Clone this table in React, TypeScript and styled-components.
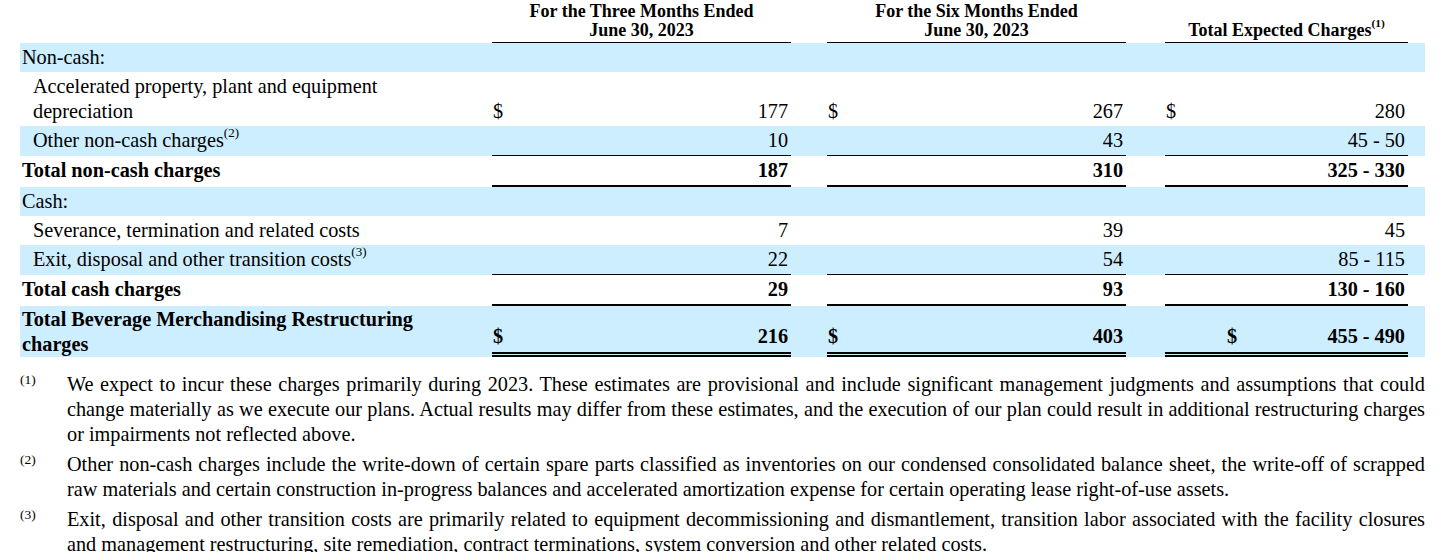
import styled, { createGlobalStyle } from "styled-components";

type Rule = "none" | "thin" | "thick" | "double";

type Amt = {
  value: string;
  dollar?: boolean;
  inset?: number;
};

type Line = {
  label: string;
  sup?: string;
  indent?: boolean;
  bold?: boolean;
  shaded?: boolean;
  grand?: boolean;
  rule?: Rule;
  values?: Amt[];
};

const GlobalStyle = createGlobalStyle`
  body {
    margin: 0;
    background: #fff;
    color: #000;
    font-family: "Liberation Serif", "Times New Roman", serif;
  }
`;

const Page = styled.div`
  width: 1405px;
  padding-left: 20px;
`;

const Table = styled.table`
  width: 1405px;
  table-layout: fixed;
  border-collapse: separate;
  border-spacing: 0;
  font-size: 20.25px;
  line-height: 25px;
`;

const Col = styled.col<{ $w: number }>`
  width: ${(p) => p.$w}px;
`;

const HeadCell = styled.th<{ $ruled?: boolean }>`
  font-size: 18px;
  line-height: 19px;
  font-weight: bold;
  text-align: center;
  vertical-align: bottom;
  padding: 2px 0 2px;
  border-bottom: ${(p) => (p.$ruled ? "1px solid #000" : "none")};
`;

const Row = styled.tr<{ $shaded?: boolean }>`
  background: ${(p) => (p.$shaded ? "#cceeff" : "transparent")};
`;

const Label = styled.td<{ $indent?: boolean; $bold?: boolean; $grand?: boolean }>`
  padding: ${(p) => (p.$grand ? "1px" : "2px")} 30px
    ${(p) => (p.$grand ? "0" : "2px")} ${(p) => (p.$indent ? 13 : 2)}px;
  font-weight: ${(p) => (p.$bold ? "bold" : "normal")};
  vertical-align: top;
`;

const ruleCss: Record<Rule, string> = {
  none: "none",
  thin: "1px solid #000",
  thick: "2px solid #000",
  double: "5px double #000",
};

const Value = styled.td<{ $rule: Rule; $bold?: boolean; $grand?: boolean }>`
  vertical-align: bottom;
  padding: 2px 3px ${(p) => (p.$grand ? 3 : 2)}px 1px;
  font-weight: ${(p) => (p.$bold ? "bold" : "normal")};
  border-bottom: ${(p) => ruleCss[p.$rule]};
`;

const Spacer = styled.td``;

const Amount = styled.div`
  display: flex;
  align-items: baseline;
`;

const Dollar = styled.span<{ $inset?: number }>`
  margin-left: ${(p) => p.$inset ?? 0}px;
`;

const Figure = styled.span`
  margin-left: auto;
`;

const Sup = styled.span<{ $size: number; $raise: number }>`
  font-size: ${(p) => p.$size}px;
  line-height: 0;
  vertical-align: ${(p) => p.$raise}px;
`;

const Notes = styled.div`
  margin-top: 15px;
  display: flex;
  flex-direction: column;
  gap: 5px;
`;

const Note = styled.div`
  display: grid;
  grid-template-columns: 47px 1fr;
`;

const Marker = styled.span`
  font-size: 13.5px;
  line-height: 16px;
`;

const NoteText = styled.p`
  margin: 0;
  font-size: 20.25px;
  line-height: 25px;
  text-align: justify;
`;

const lines: Line[] = [
  { label: "Non-cash:", shaded: true },
  {
    label: "Accelerated property, plant and equipment depreciation",
    indent: true,
    values: [
      { value: "177", dollar: true },
      { value: "267", dollar: true },
      { value: "280", dollar: true },
    ],
  },
  {
    label: "Other non-cash charges",
    sup: "(2)",
    indent: true,
    shaded: true,
    rule: "thin",
    values: [{ value: "10" }, { value: "43" }, { value: "45 - 50" }],
  },
  {
    label: "Total non-cash charges",
    bold: true,
    rule: "thick",
    values: [{ value: "187" }, { value: "310" }, { value: "325 - 330" }],
  },
  { label: "Cash:", shaded: true },
  {
    label: "Severance, termination and related costs",
    indent: true,
    values: [{ value: "7" }, { value: "39" }, { value: "45" }],
  },
  {
    label: "Exit, disposal and other transition costs",
    sup: "(3)",
    indent: true,
    shaded: true,
    rule: "thin",
    values: [{ value: "22" }, { value: "54" }, { value: "85 - 115" }],
  },
  {
    label: "Total cash charges",
    bold: true,
    rule: "thick",
    values: [{ value: "29" }, { value: "93" }, { value: "130 - 160" }],
  },
  {
    label: "Total Beverage Merchandising Restructuring charges",
    bold: true,
    shaded: true,
    grand: true,
    rule: "double",
    values: [
      { value: "216", dollar: true },
      { value: "403", dollar: true },
      { value: "455 - 490", dollar: true, inset: 61 },
    ],
  },
];

const notes = [
  {
    mark: "(1)",
    text: "We expect to incur these charges primarily during 2023. These estimates are provisional and include significant management judgments and assumptions that could change materially as we execute our plans. Actual results may differ from these estimates, and the execution of our plan could result in additional restructuring charges or impairments not reflected above.",
  },
  {
    mark: "(2)",
    text: "Other non-cash charges include the write-down of certain spare parts classified as inventories on our condensed consolidated balance sheet, the write-off of scrapped raw materials and certain construction in-progress balances and accelerated amortization expense for certain operating lease right-of-use assets.",
  },
  {
    mark: "(3)",
    text: "Exit, disposal and other transition costs are primarily related to equipment decommissioning and dismantlement, transition labor associated with the facility closures and management restructuring, site remediation, contract terminations, system conversion and other related costs.",
  },
];

const widths = [472, 299, 36, 299, 39, 243, 17];

const ValueCell = ({ amt, line }: { amt?: Amt; line: Line }) => (
  <Value $rule={line.rule ?? "none"} $bold={line.bold} $grand={line.grand}>
    {amt && (
      <Amount>
        {amt.dollar && <Dollar $inset={amt.inset}>$</Dollar>}
        <Figure>{amt.value}</Figure>
      </Amount>
    )}
  </Value>
);

const App = () => {
  return (
    <Page>
      <GlobalStyle />
      <Table>
        <colgroup>
          {widths.map((w, i) => (
            <Col key={i} $w={w} />
          ))}
        </colgroup>
        <thead>
          <tr>
            <HeadCell />
            <HeadCell $ruled>
              For the Three Months Ended
              <br />
              June 30, 2023
            </HeadCell>
            <HeadCell />
            <HeadCell $ruled>
              For the Six Months Ended
              <br />
              June 30, 2023
            </HeadCell>
            <HeadCell />
            <HeadCell $ruled>
              Total Expected Charges
              <Sup $size={11.4} $raise={9}>
                (1)
              </Sup>
            </HeadCell>
            <HeadCell />
          </tr>
        </thead>
        <tbody>
          {lines.map((line, i) => (
            <Row key={i} $shaded={line.shaded}>
              <Label $indent={line.indent} $bold={line.bold} $grand={line.grand}>
                {line.label}
                {line.sup && (
                  <Sup $size={13} $raise={10}>
                    {line.sup}
                  </Sup>
                )}
              </Label>
              <ValueCell amt={line.values?.[0]} line={line} />
              <Spacer />
              <ValueCell amt={line.values?.[1]} line={line} />
              <Spacer />
              <ValueCell amt={line.values?.[2]} line={line} />
              <Spacer />
            </Row>
          ))}
        </tbody>
      </Table>
      <Notes>
        {notes.map((n) => (
          <Note key={n.mark}>
            <Marker>{n.mark}</Marker>
            <NoteText>{n.text}</NoteText>
          </Note>
        ))}
      </Notes>
    </Page>
  );
};

export default App;
